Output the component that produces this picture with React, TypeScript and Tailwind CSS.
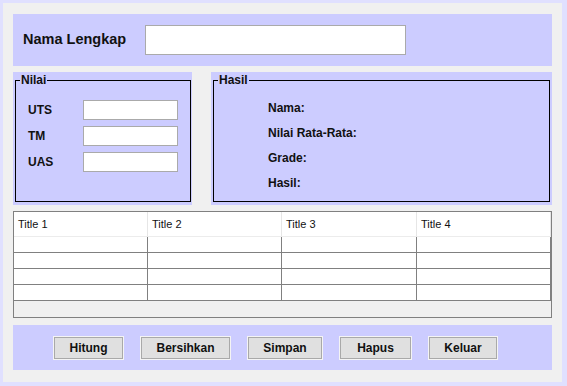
import React from 'react';

const font = { fontFamily: '"Liberation Sans", Arial, sans-serif' };

function Field({ label }: { label: string }) {
    return (
        <div className="flex items-center h-[20px]">
            <span className="w-[55px] text-[12px] font-bold text-[#111]">{label}</span>
            <input className="w-[95px] h-[20px] bg-white border border-[#aaaaaa] outline-none" />
        </div>
    );
}

const buttons = [
    { label: 'Hitung', w: 'w-[69px]' },
    { label: 'Bersihkan', w: 'w-[89px]' },
    { label: 'Simpan', w: 'w-[74px]' },
    { label: 'Hapus', w: 'w-[71px]' },
    { label: 'Keluar', w: 'w-[68px]' },
];

export default function App() {
    return (
        <div className="w-[567px] h-[386px] bg-[#e0e0ff] pl-[3px] pt-[3px] pr-[5px] pb-[4px]" style={font}>
            <div className="w-full h-full bg-[#f0f0f0] pl-[10px] pr-[10px] pt-[11px] flex flex-col">
                {/* Nama lengkap */}
                <div className="h-[52px] bg-[#ccccff] flex items-center pl-[10px]">
                    <span className="w-[122px] text-[14.5px] font-bold text-[#111]">Nama Lengkap</span>
                    <input className="w-[261px] h-[30px] bg-white border border-[#aaaaaa] outline-none" />
                </div>

                <div className="mt-[6px] h-[133px] flex gap-[19px]">
                    {/* Nilai */}
                    <div className="w-[179px] bg-[#ccccff] pl-[2px] pr-[1px] pt-[1px] pb-[3px]">
                        <fieldset className="h-full border border-black m-0 p-0">
                            <legend className="ml-[4px] px-[1px] text-[12px] leading-[14px] font-bold text-[#111]">Nilai</legend>
                            <div className="pl-[12px] pt-[13px] flex flex-col gap-[6px]">
                                <Field label="UTS" />
                                <Field label="TM" />
                                <Field label="UAS" />
                            </div>
                        </fieldset>
                    </div>

                    {/* Hasil */}
                    <div className="flex-1 bg-[#ccccff] pl-[2px] pr-[2px] pt-[1px] pb-[3px]">
                        <fieldset className="h-full border border-black m-0 p-0">
                            <legend className="ml-[4px] px-[1px] text-[12px] leading-[14px] font-bold text-[#111]">Hasil</legend>
                            <div className="pl-[54px] pt-[8px] flex flex-col text-[12px] font-bold text-[#111]">
                                <div className="h-[25px] flex items-center">Nama:</div>
                                <div className="h-[25px] flex items-center">Nilai Rata-Rata:</div>
                                <div className="h-[25px] flex items-center">Grade:</div>
                                <div className="h-[25px] flex items-center">Hasil:</div>
                            </div>
                        </fieldset>
                    </div>
                </div>

                {/* Tabel */}
                <div className="mt-[6px] h-[107px] border border-[#808080] bg-[#f0f0f0] flex flex-col">
                    <div className="grid grid-cols-[134px_134px_135px_134px] h-[25px] bg-white border-b border-[#ececec]">
                        {['Title 1', 'Title 2', 'Title 3', 'Title 4'].map((t) => (
                            <div key={t} className="border-r border-[#e6e6e6] pl-[4px] flex items-center text-[11px] text-[#111]">
                                {t}
                            </div>
                        ))}
                    </div>
                    {[0, 1, 2, 3].map((r) => (
                        <div key={r} className="grid grid-cols-[134px_134px_135px_134px] h-[16px]">
                            {[0, 1, 2, 3].map((c) => (
                                <div key={c} className="bg-white border-r border-b border-[#808080]" />
                            ))}
                        </div>
                    ))}
                </div>

                {/* Tombol */}
                <div className="mt-[7px] h-[45px] bg-[#ccccff] flex items-center pl-[41px] gap-[18px]">
                    {buttons.map((b) => (
                        <button
                            key={b.label}
                            className={`${b.w} h-[22px] bg-[#e0e0e0] border border-[#a9a9a9] shadow-[0_0_0_1px_#f4f4f4] text-[12px] font-bold text-[#111] flex items-center justify-center`}
                        >
                            {b.label}
                        </button>
                    ))}
                </div>
            </div>
        </div>
    );
}
